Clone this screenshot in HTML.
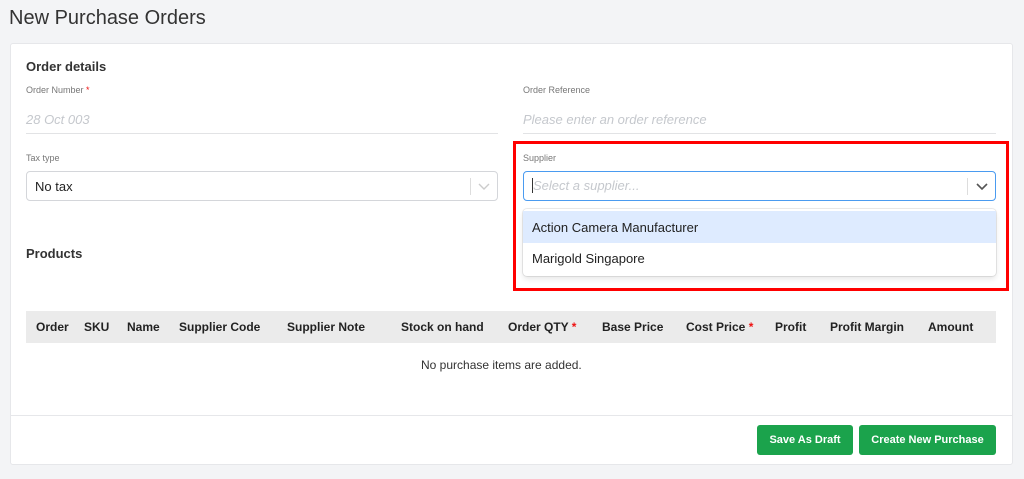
<!DOCTYPE html>
<html><head><meta charset="utf-8"><style>
*{box-sizing:border-box;margin:0;padding:0}
body{width:1024px;height:479px;background:#f3f4f6;font-family:"Liberation Sans",sans-serif;color:#222;position:relative;overflow:hidden}
.a{position:absolute;white-space:nowrap}
.card{position:absolute;left:10px;top:43px;width:1003px;height:422px;background:#fff;border:1px solid #e6e7ea;border-radius:3px}
.lbl{font-size:9px;color:#777}
.ph{font-size:13px;font-style:italic;color:#c5c8cd}
.sel{position:absolute;height:30px;border:1px solid #d4d6da;border-radius:4px;background:#fff}
.th{font-size:12px;font-weight:bold;color:#222;top:320px}
.btn{position:absolute;top:425px;height:30px;background:#1ba34c;border-radius:3px;color:#fff;font-size:11px;font-weight:bold;text-align:center;line-height:30px}
.star{color:#e11;}
</style></head><body>
<div class="a" style="left:9px;top:7px;font-size:20px;color:#333">New Purchase Orders</div>
<div class="card"></div>
<div style="position:absolute;left:10px;top:415px;width:1003px;height:1px;background:#e6e7ea"></div>
<div class="a" style="left:26px;top:59px;font-size:13px;font-weight:bold;color:#333">Order details</div>
<div class="a lbl" style="left:26px;top:85px">Order Number <span class="star">*</span></div>
<div class="a ph" style="left:26px;top:112px">28 Oct 003</div>
<div style="position:absolute;left:26px;top:133px;width:472px;height:1px;background:#e2e3e5"></div>
<div class="a lbl" style="left:523px;top:85px">Order Reference</div>
<div class="a ph" style="left:523px;top:112px">Please enter an order reference</div>
<div style="position:absolute;left:523px;top:133px;width:473px;height:1px;background:#e2e3e5"></div>
<div class="a lbl" style="left:26px;top:153px">Tax type</div>
<div class="sel" style="left:26px;top:171px;width:472px"><div class="a" style="left:8px;top:7px;font-size:13px;color:#222">No tax</div><div class="a" style="left:443px;top:6px;width:1px;height:17px;background:#ddd"></div><svg class="a" style="left:451px;top:11px" width="12" height="8"><path d="M1 1l5 5 5-5" fill="none" stroke="#ccc" stroke-width="1.4"/></svg></div>
<div class="a lbl" style="left:523px;top:153px">Supplier</div>
<div class="sel" style="left:523px;top:171px;width:473px;border:1px solid #4a9bf0"><div class="a" style="left:8px;top:6px;width:1px;height:15px;background:#333"></div><div class="a ph" style="left:9px;top:6px">Select a supplier...</div><div class="a" style="left:443px;top:6px;width:1px;height:17px;background:#ddd"></div><svg class="a" style="left:452px;top:11px" width="12" height="8"><path d="M1 1l5 5 5-5" fill="none" stroke="#555" stroke-width="1.6"/></svg></div>
<div style="position:absolute;left:523px;top:209px;width:473px;height:67px;background:#fff;border-radius:4px;box-shadow:0 0 0 1px rgba(0,0,0,.08),0 3px 6px rgba(0,0,0,.1)"><div style="position:absolute;left:0;top:2px;width:473px;height:32px;background:#deebff"></div><div class="a" style="left:9px;top:11px;font-size:13px;color:#222">Action Camera Manufacturer</div><div class="a" style="left:9px;top:42px;font-size:13px;color:#222">Marigold Singapore</div></div>
<div style="position:absolute;left:513px;top:141px;width:496px;height:150px;border:3px solid #f00"></div>
<div class="a" style="left:26px;top:246px;font-size:13px;font-weight:bold;color:#333">Products</div>
<div style="position:absolute;left:26px;top:311px;width:970px;height:32px;background:#ebebeb"></div>
<div class="a th" style="left:36px">Order</div>
<div class="a th" style="left:84px">SKU</div>
<div class="a th" style="left:127px">Name</div>
<div class="a th" style="left:179px">Supplier Code</div>
<div class="a th" style="left:287px">Supplier Note</div>
<div class="a th" style="left:401px">Stock on hand</div>
<div class="a th" style="left:508px">Order QTY <span class="star">*</span></div>
<div class="a th" style="left:602px">Base Price</div>
<div class="a th" style="left:686px">Cost Price <span class="star">*</span></div>
<div class="a th" style="left:775px">Profit</div>
<div class="a th" style="left:830px">Profit Margin</div>
<div class="a th" style="left:928px">Amount</div>
<div class="a" style="left:421px;top:358px;font-size:12px;color:#333">No purchase items are added.</div>
<div class="btn" style="left:757px;width:96px">Save As Draft</div>
<div class="btn" style="left:859px;width:137px">Create New Purchase</div>
</body></html>
